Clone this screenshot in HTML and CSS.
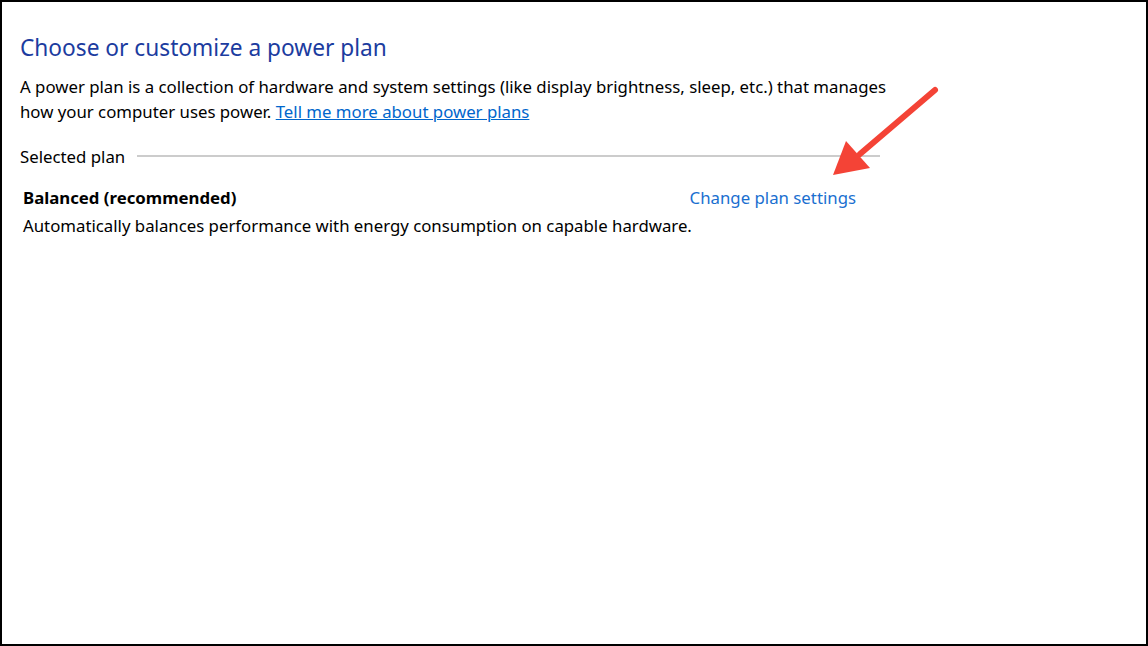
FILE: index.html
```html
<!DOCTYPE html>
<html lang="en">
<head>
    <meta charset="UTF-8">
    <meta name="viewport" content="width=device-width, initial-scale=1.0">
    <title>Power Options</title>
    <link rel="stylesheet" href="styles.css">
</head>

<body>
    <div class="window">
        <h1 class="title">Choose or customize a power plan</h1>
        <p class="intro">
            A power plan is a collection of hardware and system settings (like display brightness, sleep, etc.) that manages<br>
            how your computer uses power. <a href="#" class="more">Tell me more about power plans</a>
        </p>

        <div class="group">
            <div class="group_head">
                <span>Selected plan</span>
                <div class="rule"></div>
            </div>
            <div class="plan">
                <div class="plan_row">
                    <b class="plan_name">Balanced (recommended)</b>
                    <a href="#" class="plan_link">Change plan settings</a>
                </div>
                <div class="plan_desc">Automatically balances performance with energy consumption on capable hardware.</div>
            </div>
        </div>

        <!-- 红色箭头 指向 Change plan settings -->
        <svg class="arrow" width="120" height="100" viewBox="0 0 120 100">
            <line x1="113" y1="10" x2="38" y2="74" stroke="#f44336" stroke-width="6" stroke-linecap="round"/>
            <polygon points="11,95 24,61 48,88" fill="#f44336"/>
        </svg>
    </div>
</body>
</html>
```

FILE: styles.css
```css
* {
    margin: 0;
    padding: 0;
    box-sizing: border-box;
}

body {
    background-color: #fff;
    font-family: "Noto Sans", "Open Sans", "Liberation Sans", sans-serif;
    color: #000;
}

.window {
    position: relative;
    width: 1148px;
    height: 646px;
    border: 2px solid #000;
    padding: 31px 18px 0 18px;
}

.title {
    font-size: 22.7px;
    font-weight: 400;
    color: #1c3c9f;
    line-height: 30px;
}

.intro {
    margin-top: 11px;
    font-size: 16.8px;
    line-height: 25px;
}

.more {
    color: #0066cc;
}

.group {
    width: 860px;
    margin-top: 20px;
}

.group_head {
    display: flex;
    align-items: center;
    font-size: 16.8px;
    line-height: 26px;
}

.rule {
    flex: 1;
    height: 2px;
    margin-left: 12px;
    margin-top: -3px;
    background-color: #ccc;
}

.plan {
    padding: 14px 0 0 3px;
    font-size: 16.8px;
}

.plan_row {
    display: flex;
    justify-content: space-between;
    line-height: 28px;
    padding-right: 24px;
}

.plan_name {
    font-weight: 700;
}

.plan_link {
    color: #1a6fd0;
    text-decoration: none;
}

.plan_desc {
    line-height: 28px;
}

.arrow {
    position: absolute;
    left: 820px;
    top: 78px;
}
```
